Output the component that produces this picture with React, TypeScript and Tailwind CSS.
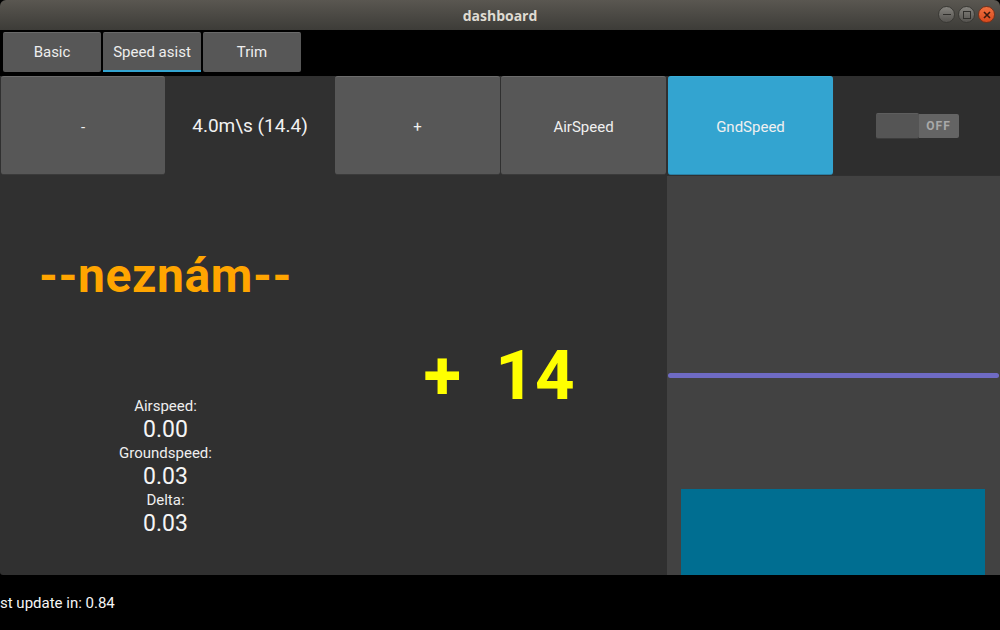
import React from "react";

const Btn = ({ children, active = false }: { children: React.ReactNode; active?: boolean }) => (
  <div
    className={
      "flex-1 flex items-center justify-center pt-[3px] rounded-[3px] text-[15px] text-[#f0f0f0] border-t border-b " +
      (active
        ? "bg-[#33a4d0] border-t-[#3aaed9] border-b-[#2a7fa3]"
        : "bg-[#575757] border-t-[#6c6c6c] border-b-[#3a3a3a]")
    }
  >
    {children}
  </div>
);

const Tab = ({ label, active = false }: { label: string; active?: boolean }) => (
  <div
    className={
      "w-[98px] h-[40px] flex items-center justify-center bg-[#575757] border-t border-t-[#6a6a6a] rounded-[2px] text-[15px] text-[#eeeeee] relative"
    }
  >
    {label}
    {active && <div className="absolute left-0 right-0 bottom-0 h-[2px] bg-[#33a4d0]" />}
  </div>
);

const Stat = ({ label, value }: { label: string; value: string }) => (
  <div className="flex flex-col items-center">
    <div className="text-[15px] leading-[23px] text-[#eeeeee]">{label}</div>
    <div className="text-[23px] leading-[24px] text-[#f5f5f5]">{value}</div>
  </div>
);

export default function App() {
  return (
    <div
      className="w-[1000px] h-[630px] bg-black flex flex-col overflow-hidden"
      style={{ fontFamily: "Roboto, 'Noto Sans', sans-serif" }}
    >
      {/* Title bar */}
      <div className="h-[30px] shrink-0 relative flex items-center justify-center bg-gradient-to-b from-[#5a5751] to-[#3d3c38] rounded-t-[6px]">
        <span
          className="text-[14px] font-bold text-[#dfdbd2]"
          style={{ fontFamily: "'Open Sans', 'DejaVu Sans', sans-serif" }}
        >
          dashboard
        </span>
        <div className="absolute right-[5px] top-[6px] flex gap-[3px]">
          <div className="w-[17px] h-[17px] rounded-full bg-gradient-to-b from-[#85837e] to-[#55534f] border border-[#3a3935] flex items-center justify-center">
            <div className="w-[8px] h-[1.5px] bg-[#2f2e2b]" />
          </div>
          <div className="w-[17px] h-[17px] rounded-full bg-gradient-to-b from-[#85837e] to-[#55534f] border border-[#3a3935] flex items-center justify-center">
            <div className="w-[8px] h-[8px] border-[1.5px] border-[#2f2e2b]" />
          </div>
          <div className="w-[17px] h-[17px] rounded-full bg-gradient-to-b from-[#f0703f] to-[#d8491c] border border-[#7a3018] flex items-center justify-center">
            <svg width="8" height="8" viewBox="0 0 8 8">
              <path d="M1 1L7 7M7 1L1 7" stroke="#3a1a0e" strokeWidth="1.6" />
            </svg>
          </div>
        </div>
      </div>

      {/* Tabs */}
      <div className="h-[46px] shrink-0 flex gap-[2px] pl-[3px] pt-[2px]">
        <Tab label="Basic" />
        <Tab label="Speed asist" active />
        <Tab label="Trim" />
      </div>

      {/* Main panel */}
      <div className="h-[499px] shrink-0 flex flex-col bg-[#303030] rounded-b-[3px]">
        {/* Top row */}
        <div className="h-[100px] shrink-0 flex gap-[1px] pb-[1px] pl-[1px]">
          <div className="w-[164px] flex"><Btn>-</Btn></div>
          <div className="w-[168px] flex items-center justify-center pt-[2px] text-[19px] text-[#f2f2f2]">
            4.0m\s (14.4)
          </div>
          <div className="w-[165px] flex"><Btn>+</Btn></div>
          <div className="w-[165px] flex"><Btn>AirSpeed</Btn></div>
          <div className="w-[166px] flex pl-[1px]"><Btn active>GndSpeed</Btn></div>
          <div className="flex-1 flex items-center justify-center bg-[#2e2e2e]">
            <div className="flex items-center">
              <div className="w-[43px] h-[26px] bg-[#555555] rounded-[2px] border-b border-b-[#3c3c3c] border-t border-t-[#5e5e5e]" />
              <div className="w-[40px] h-[24px] bg-[#646464] rounded-r-[2px] flex items-center justify-center text-[12px] font-bold tracking-[1px] text-[#a9a9a9]">
                OFF
              </div>
            </div>
          </div>
        </div>

        {/* Lower area */}
        <div className="flex-1 flex">
          <div className="w-[331px] flex flex-col">
            <div className="h-[200px] flex items-center justify-center">
              <span className="text-[48px] font-bold text-[#ffa500] tracking-[0.6px]">--neznám--</span>
            </div>
            <div className="flex-1 flex flex-col items-center pt-[19px]">
              <Stat label="Airspeed:" value="0.00" />
              <Stat label="Groundspeed:" value="0.03" />
              <Stat label="Delta:" value="0.03" />
            </div>
          </div>
          <div className="w-[336px] flex items-center justify-center">
            <span className="text-[69px] font-bold text-[#ffff00] whitespace-pre leading-none">+  14</span>
          </div>
          <div className="flex-1 bg-[#424242] flex flex-col">
            <div className="h-[197px]" />
            <div className="h-[5px] bg-[#6f6bc4] rounded-full mx-[1px]" />
            <div className="flex-1 flex flex-col justify-end px-[14px] pr-[15px]">
              <div className="h-[86px] bg-[#006e91]" />
            </div>
          </div>
        </div>
      </div>

      {/* Status bar */}
      <div className="flex-1 flex items-center pt-[1px]">
        <span className="text-[15px] text-[#f5f5f5]">st update in: 0.84</span>
      </div>
    </div>
  );
}
